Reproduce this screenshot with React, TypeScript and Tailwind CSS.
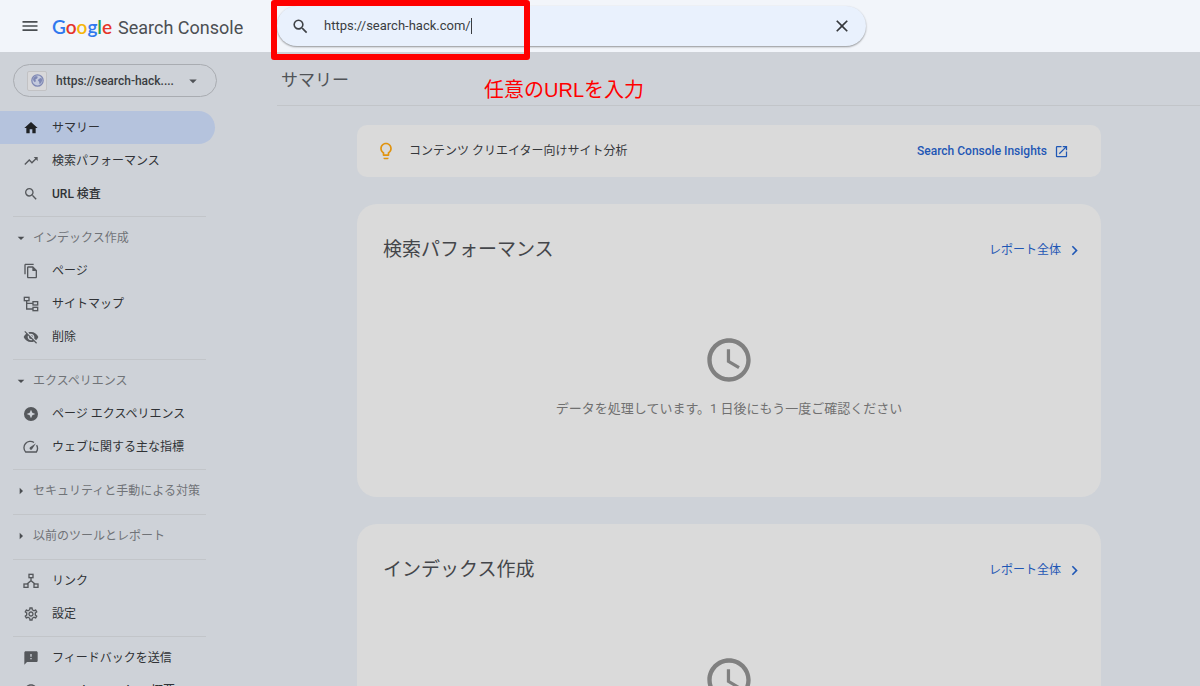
import { useState } from 'react';
import type { ComponentType } from 'react';
import {
  MdAccessTime,
  MdArrowDropDown,
  MdArrowRight,
  MdChevronRight,
  MdClose,
  MdFeedback,
  MdHome,
  MdLightbulbOutline,
  MdMenu,
  MdOpenInNew,
  MdOutlineFileCopy,
  MdOutlineInfo,
  MdOutlineSettings,
  MdSearch,
  MdTrendingUp,
  MdVisibilityOff,
} from 'react-icons/md';

type IconType = ComponentType<{ className?: string }>;

interface NavItem {
  label: string;
  icon: IconType;
  active?: boolean;
  strong?: boolean;
}

interface NavGroup {
  title?: string;
  items: NavItem[];
}

function SitemapIcon({ className }: { className?: string }) {
  return (
    <svg viewBox="0 0 24 24" fill="none" stroke="currentColor" strokeWidth="2" className={className}>
      <rect x="2" y="2" width="7" height="5" />
      <rect x="15" y="8.5" width="7" height="5" />
      <rect x="15" y="17" width="7" height="5" />
      <path d="M5.500 7v12.500H15M5.500 11H15" />
    </svg>
  );
}

function ExperienceIcon({ className }: { className?: string }) {
  return (
    <svg viewBox="0 0 24 24" fill="currentColor" fillRule="evenodd" className={className}>
      <path d="M12 1.500a10.500 10.500 0 1 0 0 21 10.500 10.500 0 0 0 0-21zm0 4l2 4.500 4.500 2-4.500 2-2 4.500-2-4.500-4.500-2 4.500-2z" />
    </svg>
  );
}

function GaugeIcon({ className }: { className?: string }) {
  return (
    <svg viewBox="0 0 24 24" fill="none" stroke="currentColor" strokeWidth="2" className={className}>
      <path d="M16.500 5.300A9.500 9.500 0 0 0 4 19.500h16a9.500 9.500 0 0 0 .4-10.200" />
      <path d="M19.500 6.500l-9 6a2.100 2.100 0 1 0 3 3z" fill="currentColor" stroke="none" />
    </svg>
  );
}

function LinksIcon({ className }: { className?: string }) {
  return (
    <svg viewBox="0 0 24 24" fill="none" stroke="currentColor" strokeWidth="2" className={className}>
      <rect x="9" y="2" width="6" height="5" />
      <rect x="1.500" y="16.500" width="6" height="5" />
      <rect x="16.500" y="16.500" width="6" height="5" />
      <path d="M12 7v5M6 16.500l6-5 6 5" />
    </svg>
  );
}

function GlobeIcon({ className }: { className?: string }) {
  return (
    <svg viewBox="0 0 16 16" className={className}>
      <circle cx="8" cy="8" r="7" fill="#c3c9dd" stroke="#7f88b4" strokeWidth="1.500" />
      <path d="M3 4.500l3-2 2.500 1-1 2-2 1 .5 2.500-1.500 1-2-2.500zM9.500 6l3-1.500 1.500 3-1.500 3.500-2 1.500-.5-3-1.500-1.500z" fill="#7f88b4" />
    </svg>
  );
}

const navGroups: NavGroup[] = [
  {
    items: [
      { label: 'サマリー', icon: MdHome, active: true },
      { label: '検索パフォーマンス', icon: MdTrendingUp },
      { label: 'URL 検査', icon: MdSearch, strong: true },
    ],
  },
  {
    title: 'インデックス作成',
    items: [
      { label: 'ページ', icon: MdOutlineFileCopy },
      { label: 'サイトマップ', icon: SitemapIcon },
      { label: '削除', icon: MdVisibilityOff },
    ],
  },
  {
    title: 'エクスペリエンス',
    items: [
      { label: 'ページ エクスペリエンス', icon: ExperienceIcon },
      { label: 'ウェブに関する主な指標', icon: GaugeIcon },
    ],
  },
  { title: 'セキュリティと手動による対策', items: [] },
  { title: '以前のツールとレポート', items: [] },
  {
    items: [
      { label: 'リンク', icon: LinksIcon },
      { label: '設定', icon: MdOutlineSettings },
    ],
  },
  {
    items: [
      { label: 'フィードバックを送信', icon: MdFeedback },
      { label: 'Search Console の概要', icon: MdOutlineInfo, strong: true },
    ],
  },
];

function Logo() {
  return (
    <a href="#" className="flex items-baseline gap-1.5 whitespace-nowrap pt-0.5">
      <span className="font-[Lato,sans-serif] text-[19px] font-semibold leading-6">
        <span className="text-[#3079ee]">G</span>
        <span className="text-[#e5352b]">o</span>
        <span className="text-[#f6b60c]">o</span>
        <span className="text-[#3079ee]">g</span>
        <span className="text-[#2ba24c]">l</span>
        <span className="text-[#e5352b]">e</span>
      </span>
      <span className="text-[18px] leading-6 text-[#4c4f53]">Search Console</span>
    </a>
  );
}

function Header() {
  const [url, setUrl] = useState('https://search-hack.com/');

  return (
    <header className="flex h-[52px] shrink-0 items-center bg-[#f2f5fa]">
      <div className="flex w-[277px] shrink-0 items-center gap-3 pl-5">
        <button aria-label="メニュー" className="text-[#4a4d51]">
          <MdMenu className="size-5" />
        </button>
        <Logo />
      </div>
      <div className="relative max-w-[589px] flex-1">
        <div className="flex h-10 items-center rounded-full bg-[#e9f1fd] pl-3.5 pr-3.5 shadow-[0_1px_2px_rgba(0,0,0,0.4)]">
          <MdSearch className="size-[19px] text-[#3f4246]" />
          <input
            aria-label="URL を検査"
            value={url}
            onChange={(e) => setUrl(e.target.value)}
            className="ml-3.5 bg-transparent text-[13px] text-[#3a3d41] outline-none [field-sizing:content]"
          />
          <span className="h-4 w-px bg-[#3a3d41]" />
          <button aria-label="クリア" className="ml-auto text-[#35383c]" onClick={() => setUrl('')}>
            <MdClose className="size-5" />
          </button>
        </div>
        {/* callout frame and its note */}
        <div className="pointer-events-none absolute -left-1.5 -top-1.5 z-10 h-[60px] w-[259px] rounded-[3px] border-[6px] border-[#ff0000]" />
        <p className="absolute left-[207px] top-[70px] z-10 whitespace-nowrap font-['Liberation_Sans','Noto_Sans_CJK_JP',sans-serif] text-[20px] leading-7 text-[#ff0000]">
          任意のURLを入力
        </p>
      </div>
    </header>
  );
}

function NavLink({ item }: { item: NavItem }) {
  const Icon = item.icon;
  return (
    <a
      href="#"
      className={`flex h-[33px] items-center rounded-r-full pl-[23px] text-xs text-[#303236] ${
        item.active ? 'bg-[#b5c3dd]' : ''
      } ${item.strong ? 'font-medium' : ''}`}
    >
      <Icon className={`size-4 shrink-0 ${item.active ? 'text-[#1f2124]' : 'text-[#55585c]'}`} />
      <span className="ml-[13px] whitespace-nowrap">{item.label}</span>
    </a>
  );
}

function Sidebar() {
  return (
    <aside className="w-[258px] shrink-0 pt-3">
      <button className="ml-[13px] flex h-[33px] w-[204px] items-center rounded-full border border-[#a9acb1] pl-[13px] pr-3.5 text-[#3a3d41]">
        <span className="flex size-5 items-center justify-center rounded-xs border border-[#c2c2c4] bg-[#d8d8da]">
          <GlobeIcon className="size-[13px]" />
        </span>
        <span className="ml-[9px] text-xs font-medium">https://search-hack....</span>
        <MdArrowDropDown className="ml-auto size-[18px] text-[#505357]" />
      </button>
      <nav className="mt-3.5 w-[215px]">
        {navGroups.map((group, i) => {
          const open = group.items.length > 0;
          return (
            <div key={i}>
              {i > 0 && <hr className="mb-1 ml-[13px] mr-[9px] mt-1.5 border-[#c2c5c9]" />}
              {group.title && (
                <button
                  className={`flex w-full items-center gap-1 pl-[13px] text-xs text-[#707377] ${
                    open ? 'h-[33px]' : 'h-[34px]'
                  }`}
                >
                  {open ? (
                    <MdArrowDropDown className="size-4 text-[#4b4e52]" />
                  ) : (
                    <MdArrowRight className="size-4 text-[#4b4e52]" />
                  )}
                  <span className="whitespace-nowrap">{group.title}</span>
                </button>
              )}
              {group.items.map((item) => (
                <NavLink key={item.label} item={item} />
              ))}
            </div>
          );
        })}
      </nav>
    </aside>
  );
}

function ReportCard({ title }: { title: string }) {
  return (
    <section className="mt-[27px] h-[293px] rounded-[20px] bg-[#dadada]">
      <div className="flex items-center justify-between pl-[26px] pr-[17px] pt-8">
        <h2 className="text-[19px] leading-7 text-[#44464a]">{title}</h2>
        <a href="#" className="flex items-center gap-1 text-xs text-[#1f57b5]">
          レポート全体
          <MdChevronRight className="size-[19px]" />
        </a>
      </div>
      <div className="mt-[70px] flex flex-col items-center text-[#808080]">
        <MdAccessTime className="size-[52px]" />
        <p className="mt-[13px] text-[13px] leading-5 text-[#707070]">
          データを処理しています。1 日後にもう一度ご確認ください
        </p>
      </div>
    </section>
  );
}

export default function App() {
  return (
    <div className="flex h-screen flex-col overflow-hidden bg-[#ced2d8] font-[Roboto,'Noto_Sans_CJK_JP',sans-serif]">
      <Header />
      <div className="flex min-h-0 flex-1">
        <Sidebar />
        <main className="min-w-0 flex-1">
          <div className="ml-[19px] border-b border-[#c2c5c9] pb-[11px] pl-1 pt-3.5">
            <h1 className="text-[17px] leading-7 text-[#505357]">サマリー</h1>
          </div>
          <div className="mx-auto mt-[19px] max-w-[744px]">
            <div className="flex h-[52px] items-center rounded-[10px] bg-[#dadada] pl-[19px] pr-8">
              <MdLightbulbOutline className="size-5 text-[#e0930f]" />
              <span className="ml-[13px] text-xs text-[#35373a]">コンテンツ クリエイター向けサイト分析</span>
              <a href="#" className="ml-auto flex items-center gap-[7px] text-xs font-medium text-[#1f57b5]">
                Search Console Insights
                <MdOpenInNew className="size-[15px]" />
              </a>
            </div>
            <ReportCard title="検索パフォーマンス" />
            <ReportCard title="インデックス作成" />
          </div>
        </main>
      </div>
    </div>
  );
}
